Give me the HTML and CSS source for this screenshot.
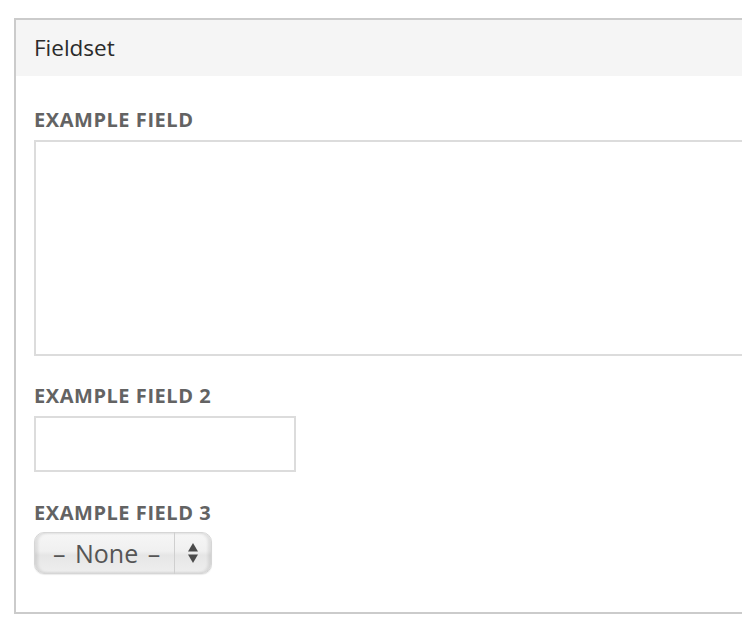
FILE: index.html
```html
<!DOCTYPE html>
<html>
<head>
<meta charset="utf-8">
<link rel="stylesheet" href="styles.css">
</head>
<body>
<div class="page">
  <div class="fieldset">
    <div class="legend">Fieldset</div>
    <div class="content">
      <label class="label first">Example field</label>
      <textarea class="textarea"></textarea>
      <label class="label second">Example field 2</label>
      <input class="input" type="text">
      <label class="label third">Example field 3</label>
      <div class="select-wrap">
        <select class="select"><option>– None –</option></select>
        <div class="select-arrows">
          <svg width="14" height="24" viewBox="0 0 14 24"><path d="M7 2 L12 10.5 L2 10.5 Z" fill="#4a4a4a"/><path d="M7 22 L12 13.5 L2 13.5 Z" fill="#4a4a4a"/></svg>
        </div>
      </div>
    </div>
  </div>
</div>
</body>
</html>
```
FILE: styles.css
```css
html, body {
  margin: 0;
  padding: 0;
  overflow: hidden;
  background: #fff;
}
.page {
  padding: 18px 0 0 14px;
  width: 900px;
  font-family: "Open Sans", "DejaVu Sans", sans-serif;
}
.fieldset {
  width: 780px;
  border: 2px solid #cbcbcb;
  box-sizing: border-box;
}
.legend {
  background: #f5f5f5;
  height: 56px;
  line-height: 56px;
  padding-left: 18px;
  font-size: 22.5px;
  color: #2b2b2b;
}
.content {
  padding: 32px 18px 38px 18px;
  display: flex;
  flex-direction: column;
  align-items: flex-start;
}
.label {
  display: block;
  font-size: 20px;
  font-weight: bold;
  line-height: 24px;
  text-transform: uppercase;
  color: #636363;
  letter-spacing: 0.55px;
  margin-bottom: 8px;
}
.label.second { margin-top: 28px; }
.label.third { margin-top: 29px; margin-bottom: 7px; }
.textarea {
  display: block;
  width: 100%;
  height: 216px;
  box-sizing: border-box;
  border: 2px solid #dcdcdc;
  margin: 0;
  padding: 0;
  resize: none;
  outline: none;
}
.input {
  display: block;
  width: 262px;
  height: 56px;
  box-sizing: border-box;
  border: 2px solid #dcdcdc;
  margin: 0;
  padding: 0;
  outline: none;
}
.select-wrap {
  position: relative;
  width: 178px;
  height: 42px;
}
.select {
  -webkit-appearance: none;
  appearance: none;
  width: 178px;
  height: 42px;
  box-sizing: border-box;
  margin: 0;
  border: 1px solid #d6d6d6;
  border-radius: 10px;
  padding: 0 0 0 18px;
  font-family: "Open Sans", "DejaVu Sans", sans-serif;
  font-size: 25px;
  word-spacing: 3px;
  color: #555;
  background: linear-gradient(to bottom, #f6f6f6 0%, #f0f0f0 45%, #e6e6e6 55%, #eeeeee 100%);
  box-shadow: inset 3px 0 3px rgba(0,0,0,0.09), inset -3px 0 3px rgba(0,0,0,0.09), 0 1px 1px rgba(0,0,0,0.08);
  outline: none;
}
.select-arrows {
  position: absolute;
  top: 0;
  left: 140px;
  width: 38px;
  height: 42px;
  border-left: 1px solid #cfcfcf;
  display: flex;
  align-items: center;
  justify-content: center;
  pointer-events: none;
  box-sizing: border-box;
  padding-right: 2px;
}
.select-arrows svg { display: block; }
```
